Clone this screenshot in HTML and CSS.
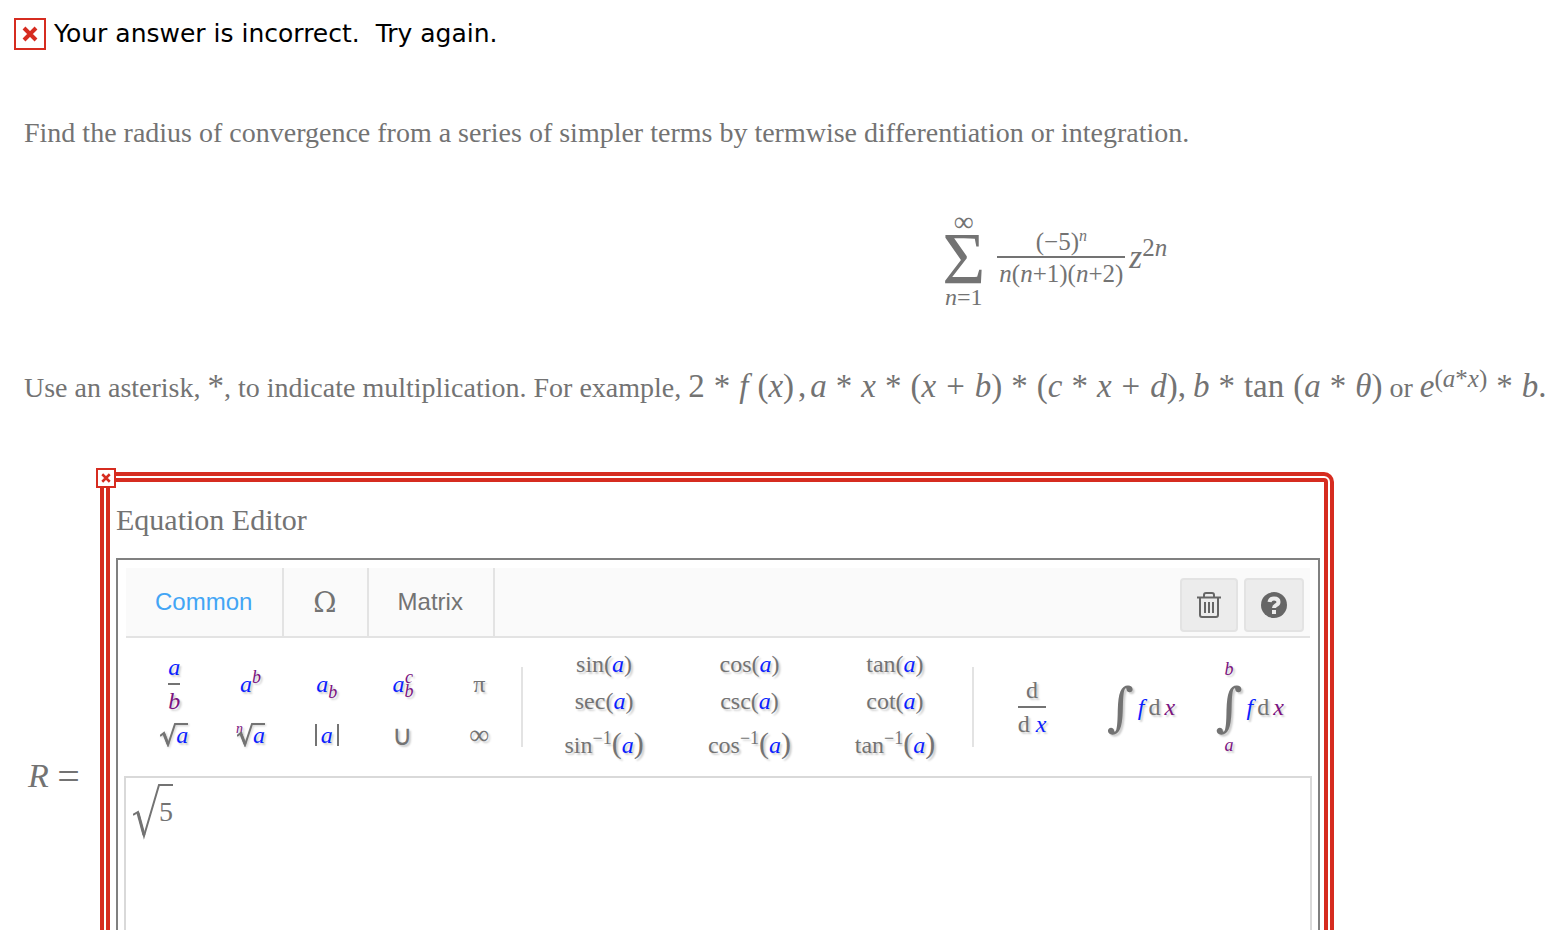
FILE: index.html
```html
<!DOCTYPE html>
<html lang="en">
<head>
  <meta charset="UTF-8">
  <title>Radius of Convergence</title>
  <link rel="stylesheet" href="styles.css">
</head>
<body>

  <div class="feedback">
    <span class="wrong-icon">
      <svg viewBox="0 0 16 16" width="16" height="16"><path d="M2 2L14 14M14 2L2 14"/></svg>
    </span>
    <span>Your answer is incorrect.&nbsp; Try again.</span>
  </div>

  <p class="question">Find the radius of convergence from a series of simpler terms by termwise differentiation or integration.</p>

  <div class="series">
    <div class="sum">
      <span class="sum-top">∞</span>
      <span class="sigma">Σ</span>
      <span class="sum-bottom"><i>n</i>=1</span>
    </div>
    <div class="fraction">
      <span class="num">(−5)<sup><i>n</i></sup></span>
      <span class="den"><i>n</i>(<i>n</i>+1)(<i>n</i>+2)</span>
    </div>
    <div class="power"><i>z</i><sup>2<i>n</i></sup></div>
  </div>

  <p class="hint">Use an asterisk, <span class="math">*</span>, to indicate multiplication. For example, <span class="math">2<b class="op">*</b><i class="fn">f</i>(<i>x</i>)</span><span class="math comma">,</span><span class="math"><i>a</i><b class="op">*</b><i>x</i><b class="op">*</b>(<i>x</i><b class="op plus">+</b><i>b</i>)<b class="op">*</b>(<i>c</i><b class="op">*</b><i>x</i><b class="op plus">+</b><i>d</i>),</span> <span class="math"><i>b</i><b class="op">*</b><span class="name">tan</span>(<i>a</i><b class="op">*</b><i>θ</i>)</span> or <span class="math"><i>e</i><sup>(<i>a</i>*<i>x</i>)</sup><b class="op">*</b><i>b</i>.</span></p>

  <div class="answer">
    <label class="answer-label" for="answer"><i>R</i> <span class="equals">=</span></label>
    <div class="editor-outer">
      <span class="badge">
        <svg viewBox="0 0 16 16" width="10" height="10"><path d="M2 2L14 14M14 2L2 14"/></svg>
      </span>
      <div class="editor-inner">
        <h2>Equation Editor</h2>
        <div class="editor">
          <div class="toolbar">
            <button class="tab active">Common</button>
            <button class="tab omega">Ω</button>
            <button class="tab">Matrix</button>
            <div class="tools">
              <button class="tool" aria-label="Clear">
                <svg viewBox="0 0 24 26" width="24" height="26">
                  <path class="line" d="M0 5.500H24M7 5V3Q7 1 9 1H15Q17 1 17 3V5M3 6V23Q3 25 5 25H19Q21 25 21 23V6"/>
                  <path class="line" d="M8 10V21M12 10V21M16 10V21"/>
                </svg>
              </button>
              <button class="tool help" aria-label="Help">
                <svg viewBox="0 0 26 26" width="26" height="26">
                  <circle cx="13" cy="13" r="13"/>
                  <path class="mark" d="M8.500 10Q9 6.500 13 6.500Q17.500 6.500 17.500 10Q17.500 12 15 13.200Q13 14.300 13 16"/>
                  <rect class="dot" x="11" y="18" width="4" height="4"/>
                </svg>
              </button>
            </div>
          </div>

          <div class="palette">
            <div class="group common">
              <button><span class="frac"><i class="a">a</i><i class="b">b</i></span></button>
              <button><span><i class="a">a</i><sup><i class="b">b</i></sup></span></button>
              <button><span><i class="a">a</i><sub><i class="b">b</i></sub></span></button>
              <button><i class="a">a</i><span class="stack"><i class="b">c</i><i class="b">b</i></span></button>
              <button>π</button>
              <button><svg class="root" viewBox="0 0 28 24" width="28" height="24"><path d="M0 13L4 10L8 22L15 1H28"/><path class="thick" d="M4 11L8 21"/></svg><i class="a under">a</i></button>
              <button><i class="b index">n</i><svg class="root" viewBox="0 0 28 24" width="28" height="24"><path d="M0 13L4 10L8 22L15 1H28"/><path class="thick" d="M4 11L8 21"/></svg><i class="a under">a</i></button>
              <button><span class="bars"><i class="a">a</i></span></button>
              <button class="union">∪</button>
              <button class="infinity">∞</button>
            </div>
            <div class="separator"></div>
            <div class="group trig">
              <button>sin(<i class="a">a</i>)</button>
              <button>cos(<i class="a">a</i>)</button>
              <button>tan(<i class="a">a</i>)</button>
              <button>sec(<i class="a">a</i>)</button>
              <button>csc(<i class="a">a</i>)</button>
              <button>cot(<i class="a">a</i>)</button>
              <button>sin<sup>−1</sup><span class="paren">(</span><i class="a">a</i><span class="paren">)</span></button>
              <button>cos<sup>−1</sup><span class="paren">(</span><i class="a">a</i><span class="paren">)</span></button>
              <button>tan<sup>−1</sup><span class="paren">(</span><i class="a">a</i><span class="paren">)</span></button>
            </div>
            <div class="separator"></div>
            <div class="group calculus">
              <button><span class="frac"><span>d</span><span>d <i class="a">x</i></span></span></button>
              <button><span class="integral"><span class="sign">∫</span></span><i class="a">f</i> d <i class="b">x</i></button>
              <button><span class="integral"><i class="b">b</i><span class="sign">∫</span><i class="b">a</i></span><i class="a">f</i> d <i class="b">x</i></button>
            </div>
          </div>

          <div class="math-input">
            <svg class="radical" viewBox="0 0 28 56" width="28" height="56"><path d="M0 31L5 28L11 52L26 1H28"/><path class="thick" d="M5 29L11 51"/></svg>
            <input id="answer" type="text" value="5">
          </div>
        </div>
      </div>
    </div>
  </div>

</body>
</html>
```
FILE: styles.css
```css
* {
  box-sizing: border-box;
}

body {
  margin: 0;
  height: 100vh;
  overflow: hidden;
  background: #fff;
  color: #737373;
  font-family: "Liberation Serif", "Times New Roman", serif;
  font-size: 28px;
}

button,
input {
  margin: 0;
  padding: 0;
  border: 0;
  background: none;
  color: inherit;
  font: inherit;
}

button {
  cursor: pointer;
}

sup,
sub {
  line-height: 0;
}

/* feedback */
.feedback {
  display: flex;
  align-items: center;
  gap: 8px;
  padding: 18px 14px 0;
  color: #000;
  font-family: "DejaVu Sans", Verdana, sans-serif;
  font-size: 25px;
  line-height: 32px;
}

.wrong-icon,
.badge {
  display: flex;
  align-items: center;
  justify-content: center;
  background: #fff;
  border: 2px solid #d62c20;
}

.wrong-icon {
  width: 32px;
  height: 32px;
}

.wrong-icon path,
.badge path {
  fill: none;
  stroke: #d62c20;
  stroke-width: 4;
}

/* problem text */
.question {
  margin: 67px 24px 0;
  line-height: 32px;
}

.series {
  display: flex;
  align-items: center;
  justify-content: center;
  margin-top: 65px;
  padding-left: 36%;
  padding-right: 4px;
  height: 92px;
  font-size: 25px;
}

.sum {
  display: flex;
  flex-direction: column;
  align-items: center;
  margin-right: 12px;
}

.sum-top {
  font-size: 28px;
  line-height: 16px;
}

.sigma {
  font-size: 74px;
  line-height: 58px;
}

.sum-bottom {
  font-size: 24px;
  line-height: 18px;
}

.fraction {
  display: flex;
  flex-direction: column;
  text-align: center;
  line-height: 28px;
  padding-bottom: 4px;
}

.fraction .num {
  border-bottom: 2px solid #737373;
}

.fraction .den {
  padding: 2px 2px 0;
}

.fraction sup {
  font-size: 16px;
}

.power {
  margin-left: 4px;
  padding-bottom: 6px;
  font-size: 33px;
}

.power sup {
  font-size: 25px;
}

.hint {
  margin: 60px 0 0 24px;
  line-height: 40px;
  white-space: nowrap;
}

.math {
  font-size: 33px;
}

.math sup {
  font-size: 25px;
  vertical-align: 10px;
}

.op {
  margin: 0 9px;
  font-weight: normal;
}

.plus {
  margin: 0 10px;
}

.fn,
.name {
  margin-right: 9px;
}

.comma {
  margin: 0 4px;
}

/* answer */
.answer {
  display: flex;
  align-items: center;
  margin: 64px 220px 0 28px;
}

.answer-label {
  flex: 0 0 72px;
  font-size: 34px;
  line-height: 40px;
}

.equals {
  font-size: 40px;
  line-height: 0;
  vertical-align: -3px;
}

.editor-outer {
  position: relative;
  flex: 1;
  padding: 2px;
  border: 4px solid #d62c20;
  border-radius: 10px;
}

.editor-inner {
  padding: 0 4px 8px 6px;
  border: 4px solid #d62c20;
  border-radius: 4px;
}

.badge {
  position: absolute;
  top: -8px;
  left: -8px;
  width: 20px;
  height: 20px;
}

.editor-inner h2 {
  margin: 0;
  padding: 20px 0;
  font-size: 30px;
  font-weight: normal;
  line-height: 36px;
}

.editor {
  padding: 8px 6px;
  border: 2px solid #808080;
}

.toolbar {
  display: flex;
  height: 70px;
  margin: 0 2px;
  background: #fafafa;
  border-bottom: 2px solid #e3e3e3;
}

.tab {
  padding: 0 30px 0 29px;
  border-right: 2px solid #e3e3e3;
  font-family: "Liberation Sans", Arial, sans-serif;
  font-size: 24px;
}

.tab.active {
  color: #42a5f5;
}

.tab.omega {
  font-family: "DejaVu Serif", serif;
  font-size: 28px;
}

.tools {
  display: flex;
  gap: 6px;
  margin-left: auto;
  padding: 10px 6px 4px;
}

.tool {
  display: flex;
  align-items: center;
  justify-content: center;
  width: 58px;
  background: #ececec;
  border: 2px solid #e3e3e3;
  border-radius: 4px;
}

.tool.help {
  width: 60px;
}

.tool circle {
  fill: #666;
}

.tool .line {
  fill: none;
  stroke: #666;
  stroke-width: 2;
}

.tool .mark {
  fill: none;
  stroke: #ececec;
  stroke-width: 4;
}

.tool .dot {
  fill: #ececec;
}

/* button palette */
.palette {
  display: flex;
  align-items: center;
  height: 138px;
  padding-left: 8px;
  font-size: 24px;
  text-shadow: 2px 2px 2px rgba(0, 0, 0, 0.2);
}

.palette button {
  text-shadow: inherit;
  white-space: nowrap;
}

.palette i.a {
  color: #0a1eff;
}

.palette i.b {
  color: #7a1280;
}

.palette sup,
.palette sub {
  font-size: 18px;
}

.group {
  display: grid;
}

.common {
  flex: 388;
  grid-template-columns: repeat(5, 1fr);
  grid-template-rows: 52px 50px;
  padding: 4px 0 0 4px;
}

.trig {
  flex: 444;
  grid-template-columns: repeat(3, 1fr);
  grid-template-rows: 38px 36px 48px;
  padding: 0 0 2px 4px;
}

.calculus {
  flex: 332;
  grid-template-columns: repeat(3, 1fr);
  padding-right: 8px;
}

.common button,
.calculus button {
  display: flex;
  align-items: center;
  justify-content: center;
}

.separator {
  width: 2px;
  height: 80px;
  margin: 0 4px;
  background: #e3e3e3;
}

.frac {
  display: flex;
  flex-direction: column;
  line-height: 32px;
}

.frac > :first-child {
  border-bottom: 2px solid #737373;
}

.stack {
  display: flex;
  flex-direction: column;
  font-size: 18px;
  line-height: 14px;
}

.root,
.radical {
  fill: none;
  stroke: #737373;
  stroke-width: 2;
}

.root {
  filter: drop-shadow(1px 1px 1px rgba(0, 0, 0, 0.2));
}

.thick {
  stroke-width: 3;
}

.under {
  margin-left: -12px;
}

.index {
  margin: 0 -6px 12px 0;
  font-size: 14px;
}

.bars {
  padding: 0 4px;
  border: solid #737373;
  border-width: 0 2px;
  line-height: 22px;
}

.union,
.infinity {
  font-size: 28px;
}

.paren {
  font-size: 30px;
}

.calculus button {
  gap: 4px;
}

.integral {
  display: flex;
  flex-direction: column;
  align-items: center;
  font-size: 18px;
  line-height: 16px;
}

.sign {
  font-family: "DejaVu Serif", serif;
  font-size: 52px;
  font-style: italic;
  line-height: 60px;
}

/* typed answer */
.math-input {
  display: flex;
  align-items: flex-start;
  height: 276px;
  padding: 6px 7px;
  border: 2px solid #d9d9d9;
}

.math-input input {
  width: 14px;
  height: 46px;
  margin-left: -2px;
  padding-top: 8px;
  border-top: 2px solid #737373;
  outline: none;
}
```
